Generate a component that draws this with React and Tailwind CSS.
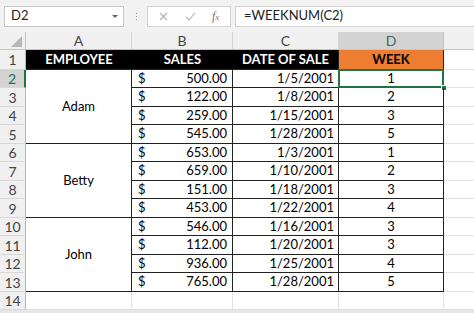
import React from 'react';

const data = [
  { n: 2, amt: '500.00', date: '1/5/2001', wk: 1 },
  { n: 3, amt: '122.00', date: '1/8/2001', wk: 2 },
  { n: 4, amt: '259.00', date: '1/15/2001', wk: 3 },
  { n: 5, amt: '545.00', date: '1/28/2001', wk: 5 },
  { n: 6, amt: '653.00', date: '1/3/2001', wk: 1 },
  { n: 7, amt: '659.00', date: '1/10/2001', wk: 2 },
  { n: 8, amt: '151.00', date: '1/18/2001', wk: 3 },
  { n: 9, amt: '453.00', date: '1/22/2001', wk: 4 },
  { n: 10, amt: '546.00', date: '1/16/2001', wk: 3 },
  { n: 11, amt: '112.00', date: '1/20/2001', wk: 3 },
  { n: 12, amt: '936.00', date: '1/25/2001', wk: 4 },
  { n: 13, amt: '765.00', date: '1/28/2001', wk: 5 },
];

const names = { 2: 'Adam', 6: 'Betty', 10: 'John' };

function RowHead({ n, selected }) {
  return (
    <div
      className={`flex items-center justify-center border-b border-[#d8d8d8] text-[14px] ${
        selected
          ? 'bg-[#d3d3d3] text-[#217346] border-r-2 border-r-[#217346]'
          : 'bg-[#f0f0f0] text-[#444] border-r border-r-[#b8b8b8]'
      }`}
    >
      {n}
    </div>
  );
}

function Toolbar() {
  return (
    <div className="flex h-[32px] items-center bg-[#f2f2f2]">
      <div className="ml-[4px] flex h-[21px] w-[120px] items-center justify-between border border-[#c8c8c8] bg-white pl-[6px] pr-[4px] text-[13px] text-[#222]">
        <span>D2</span>
        <svg width="8" height="5" viewBox="0 0 8 5">
          <path d="M1 1 L4 4 L7 1 Z" fill="#666" />
        </svg>
      </div>
      <div className="ml-[12px] flex w-[3px] flex-col gap-[2px]">
        <span className="h-[1px] w-[1px] bg-[#999]" />
        <span className="h-[1px] w-[1px] bg-[#999]" />
        <span className="h-[1px] w-[1px] bg-[#999]" />
      </div>
      <div className="ml-[8px] flex h-[21px] w-[84px] items-center border border-[#d4d4d4] bg-white">
        <svg className="ml-[11px]" width="9" height="9" viewBox="0 0 9 9">
          <path d="M1 1 L8 8 M8 1 L1 8" stroke="#b0b0b0" strokeWidth="1.1" />
        </svg>
        <svg className="ml-[17px]" width="11" height="9" viewBox="0 0 11 9">
          <path d="M1 5 L4 8 L10 1" stroke="#b0b0b0" strokeWidth="1.1" fill="none" />
        </svg>
        <span className="ml-[16px] font-['Liberation_Serif',serif] text-[12px] italic text-[#777]">
          f<span className="text-[9px]">x</span>
        </span>
      </div>
      <div className="ml-[4px] flex h-[21px] flex-1 items-center border border-r-0 border-[#d4d4d4] bg-white pl-[8px] text-[13px] text-[#222]">
        =WEEKNUM(C2)
      </div>
    </div>
  );
}

export default function App() {
  const cells = [];

  // column header row
  cells.push(
    <div key="corner" className="relative border-r border-b border-[#c4c4c4] bg-[#f0f0f0]">
      <svg className="absolute bottom-[2px] right-[3px]" width="11" height="11" viewBox="0 0 11 11">
        <path d="M11 0 L11 11 L0 11 Z" fill="#b8b8b8" />
      </svg>
    </div>
  );
  ['A', 'B', 'C'].forEach((c) =>
    cells.push(
      <div key={c} className="flex items-center justify-center border-r border-b border-r-[#d4d4d4] border-b-[#c4c4c4] bg-[#f0f0f0] text-[14px] text-[#444]">
        {c}
      </div>
    )
  );
  cells.push(
    <div key="D" className="flex items-center justify-center border-r border-b border-r-[#c4c4c4] border-b-[#c4c4c4] bg-[#d3d3d3] text-[14px] text-[#3e6b52]">
      D
    </div>
  );
  cells.push(<div key="E" className="border-b border-[#c4c4c4] bg-[#f0f0f0]" />);

  // row 1 headers
  cells.push(<RowHead key="r1" n={1} />);
  cells.push(
    <div key="h-a" className="flex items-center justify-center border-b border-[#222] bg-black text-[13px] font-bold text-white">
      EMPLOYEE
    </div>
  );
  cells.push(
    <div key="h-b" className="flex items-center justify-center border-b border-[#222] bg-black text-[13px] font-bold text-white">
      SALES
    </div>
  );
  cells.push(
    <div key="h-c" className="flex items-center justify-center border-r border-b border-[#222] bg-black text-[13px] font-bold text-white">
      DATE OF SALE
    </div>
  );
  cells.push(
    <div key="h-d" className="flex items-center justify-center border-r border-b border-[#222] bg-[#ed7d31] text-[13px] font-bold text-black">
      WEEK
    </div>
  );
  cells.push(<div key="h-e" className="border-b border-[#e2e2e2]" />);

  data.forEach((r) => {
    cells.push(<RowHead key={`rh${r.n}`} n={r.n} selected={r.n === 2} />);
    if (names[r.n]) {
      cells.push(
        <div key={`a${r.n}`} className="row-span-4 flex items-center justify-center border-r border-b border-[#222] text-[13px] text-black">
          {names[r.n]}
        </div>
      );
    }
    cells.push(
      <div key={`b${r.n}`} className="flex items-center justify-between border-r border-b border-[#222] pl-[6px] pr-[5px] text-[13px] text-black">
        <span>$</span>
        <span>{r.amt}</span>
      </div>
    );
    cells.push(
      <div key={`c${r.n}`} className="flex items-center justify-end border-r border-b border-[#222] pr-[4px] text-[13px] text-black">
        {r.date}
      </div>
    );
    cells.push(
      <div key={`d${r.n}`} className="relative flex items-center justify-center border-r border-b border-[#222] text-[13px] text-black">
        {r.wk}
        {r.n === 2 && (
          <>
            <div className="absolute left-[-1px] top-[-1px] bottom-[-1px] right-[-1px] border-2 border-[#217346]" />
            <div className="absolute bottom-[-4px] right-[-4px] h-[6px] w-[6px] border border-white bg-[#217346]" />
          </>
        )}
      </div>
    );
    cells.push(<div key={`e${r.n}`} className="border-b border-[#e2e2e2]" />);
  });

  // row 14
  cells.push(<RowHead key="r14" n={14} />);
  ['a', 'b', 'c', 'd'].forEach((c) =>
    cells.push(<div key={`14${c}`} className="border-r border-b border-[#e2e2e2]" />)
  );
  cells.push(<div key="14e" className="border-b border-[#e2e2e2]" />);

  cells.push(<div key="strip" className="col-span-6 bg-[#e6e6e6]" />);

  return (
    <div className="h-[313px] w-[474px] overflow-hidden bg-white font-['Lato','Noto_Sans',sans-serif]">
      <Toolbar />
      <div className="grid h-[281px] grid-cols-[26px_106px_101px_106px_105px_30px] grid-rows-[18px_20px_18px_19px_18px_19px_18px_19px_18px_19px_18px_19px_18px_19px_18px_3px]">
        {cells}
      </div>
    </div>
  );
}
